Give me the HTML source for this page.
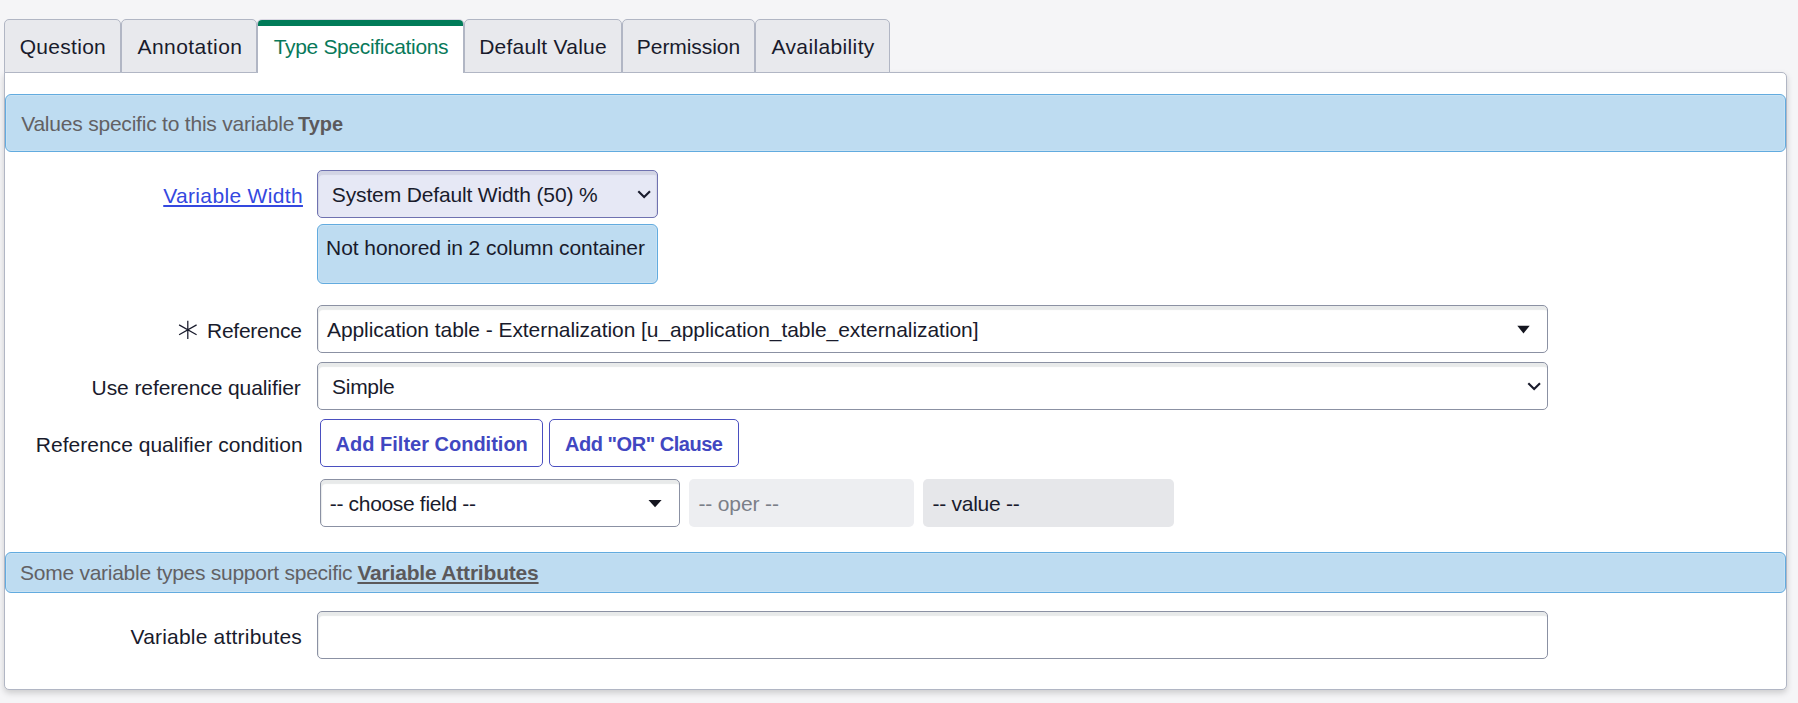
<!DOCTYPE html>
<html lang="en">
<head>
<meta charset="utf-8">
<title>Variable - Type Specifications</title>
<style>
*{box-sizing:border-box;margin:0;padding:0}
html,body{width:1798px;height:703px;overflow:hidden}
body{background:#f5f5f7;font-family:"Liberation Sans",sans-serif;font-size:20.5px;color:#1c1c28;position:relative}
.abs{position:absolute}
.tx{position:absolute;white-space:nowrap;line-height:1;z-index:5}
.tab{position:absolute;top:19px;height:54px;background:#e8e9ed;border:1px solid #b1b6c4;border-radius:5px 5px 0 0}
.tab.active{background:#fff;border:1px solid #b1b6c4;border-bottom:none;border-top:1px solid #d9d6e2;z-index:3}
.tab.active i{position:absolute;left:0;top:0;width:205px;height:6px;background:#007b58;border-radius:4px 4px 0 0}
.panel{position:absolute;left:4px;top:72px;width:1783px;height:618px;background:#fff;border:1px solid #b1b6c4;border-radius:0 5px 5px 5px;box-shadow:0 3px 6px rgba(0,0,0,.17)}
.alert{position:absolute;left:5px;width:1781px;background:#bedcf1;border:1px solid #62abdf;border-radius:6px;box-shadow:inset 0 0 0 1px rgba(255,255,255,.18)}
.inp{position:absolute;left:317px;width:1231px;height:48px;background:#fff;border:1px solid #8b91a3;border-radius:5px;box-shadow:inset 1px 4px 1px 0 #e8eaea}
.btn{position:absolute;top:419px;height:48px;border:1px solid #4a4fc0;border-radius:5px;background:#fff}
.gray{position:absolute;top:479px;height:48px;border-radius:5px}
svg{position:absolute;overflow:visible}
</style>
</head>
<body>
<div class="panel"></div>

<div role="tablist">
<div class="tab" role="tab" style="left:4px;width:117px"><span class="tx" id="t1" style="left:14.70px;top:16.12px;font-size:21px;letter-spacing:0.291px;color:#191b2c">Question</span></div>
<div class="tab" role="tab" style="left:121px;width:136px"><span class="tx" id="t2" style="left:15.53px;top:16.12px;font-size:21px;letter-spacing:0.444px;color:#191b2c">Annotation</span></div>
<div class="tab active" role="tab" aria-selected="true" style="left:257px;width:207px"><i></i><span class="tx" id="t3" style="left:15.72px;top:16.12px;font-size:21px;letter-spacing:-0.335px;color:#08795a">Type Specifications</span></div>
<div class="tab" role="tab" style="left:464px;width:158px"><span class="tx" id="t4" style="left:14.18px;top:16.12px;font-size:21px;letter-spacing:0.249px;color:#191b2c">Default Value</span></div>
<div class="tab" role="tab" style="left:622px;width:133px"><span class="tx" id="t5" style="left:13.82px;top:16.12px;font-size:21px;letter-spacing:-0.060px;color:#191b2c">Permission</span></div>
<div class="tab" role="tab" style="left:755px;width:135px"><span class="tx" id="t6" style="left:15.53px;top:16.12px;font-size:21px;letter-spacing:0.364px;color:#191b2c">Availability</span></div>
</div>

<div class="alert" style="top:94px;height:58px"><span class="tx" id="a1" style="left:15.15px;top:18.12px;font-size:21px;letter-spacing:-0.211px;color:#626164">Values specific to this variable</span><b class="tx" id="a1b" style="left:292.04px;top:18.97px;font-size:20px;letter-spacing:-0.058px;color:#5b595b;font-weight:bold">Type</b></div>

<a class="tx" id="l1" style="left:163.26px;top:185.22px;font-size:21px;letter-spacing:0.334px;color:#3448df;text-decoration:underline;text-decoration-thickness:2px;text-underline-offset:2px">Variable Width</a>

<div class="abs" style="left:317px;top:170px;width:341px;height:48px;background:#e6e8f5;border:1px solid #6f72b0;border-radius:5px;box-shadow:inset 1px 4px 1px 0 #d2d4e4,inset -2px 0 1px -1px #d6d8e8"><span class="tx" id="s1" style="left:13.85px;top:13.22px;font-size:21px;letter-spacing:-0.146px;color:#191b2c">System Default Width (50) %</span></div>
<div class="abs" style="left:317px;top:224px;width:341px;height:60px;background:#bedcf1;border:1px solid #62abdf;border-radius:6px;box-shadow:inset 0 0 0 1px rgba(255,255,255,.18)"><span class="tx" id="n1" style="left:8.05px;top:12.22px;font-size:21px;letter-spacing:-0.068px;color:#191b2c">Not honored in 2 column container</span></div>

<label class="tx" id="l2" style="left:206.98px;top:320.22px;font-size:21px;letter-spacing:-0.240px;color:#191b2c">Reference</label>
<div class="inp" style="top:305px"><span class="tx" id="i2" style="left:8.94px;top:13.22px;font-size:21px;letter-spacing:-0.062px;color:#191b2c">Application table - Externalization [u_application_table_externalization]</span></div>

<label class="tx" id="l3" style="left:91.62px;top:377.22px;font-size:21px;letter-spacing:-0.094px;color:#191b2c">Use reference qualifier</label>
<div class="inp" style="top:362px"><span class="tx" id="i3" style="left:14.06px;top:13.22px;font-size:21px;letter-spacing:-0.292px;color:#191b2c">Simple</span></div>

<label class="tx" id="l4" style="left:35.76px;top:434.22px;font-size:21px;letter-spacing:0.023px;color:#191b2c">Reference qualifier condition</label>
<div class="btn" role="button" style="left:320px;width:223px"><span class="tx" id="b1" style="left:14.60px;top:14.07px;font-size:20px;letter-spacing:0.003px;color:#4147c1;font-weight:bold">Add Filter Condition</span></div>
<div class="btn" role="button" style="left:549px;width:190px"><span class="tx" id="b2" style="left:15.00px;top:14.07px;font-size:20px;letter-spacing:-0.470px;color:#4147c1;font-weight:bold">Add &quot;OR&quot; Clause</span></div>

<div class="inp" style="left:320px;top:479px;width:360px;height:48px"><span class="tx" id="c1" style="left:8.79px;top:13.22px;font-size:21px;letter-spacing:-0.328px;color:#191b2c">-- choose field --</span></div>
<div class="gray" style="left:689px;width:225px;background:#edeef1"><span class="tx" id="c2" style="left:9.41px;top:14.22px;font-size:21px;letter-spacing:-0.133px;color:#7b7f88">-- oper --</span></div>
<div class="gray" style="left:923px;width:251px;background:#e6e7ea"><span class="tx" id="c3" style="left:9.40px;top:14.22px;font-size:21px;letter-spacing:-0.247px;color:#191b2c">-- value --</span></div>

<div class="alert" style="top:552px;height:41px"><span class="tx" id="a2" style="left:14.11px;top:9.12px;font-size:21px;letter-spacing:-0.271px;color:#626164">Some variable types support specific</span><b class="tx" id="a2b" style="left:351.42px;top:9.12px;font-size:21px;letter-spacing:-0.191px;color:#5b595b;font-weight:bold;text-decoration:underline;text-decoration-thickness:2px;text-underline-offset:2px">Variable Attributes</b></div>

<label class="tx" id="l5" style="left:130.49px;top:626.22px;font-size:21px;letter-spacing:0.201px;color:#191b2c">Variable attributes</label>
<div class="inp" style="top:611px"></div>

<svg style="left:0;top:0;z-index:6" width="1798" height="703" viewBox="0 0 1798 703">
<path d="M187.8 320.7V338.9M179.1 324.85L196.6 334.75M179.1 334.75L196.6 324.85" fill="none" stroke="#191b2c" stroke-width="1.25"/>
<path d="M638.3 191.3L644.15 197.1L650 191.3" fill="none" stroke="#191b2c" stroke-width="2.1"/>
<path d="M1528.3 383.2L1534.15 389L1540 383.2" fill="none" stroke="#191b2c" stroke-width="2.1"/>
<path d="M1517.3 325.8H1529.7L1523.5 333.4Z" fill="#14151f"/>
<path d="M648.5 500.1H661.6L655.05 507.3Z" fill="#14151f"/>
</svg>
</body>
</html>
